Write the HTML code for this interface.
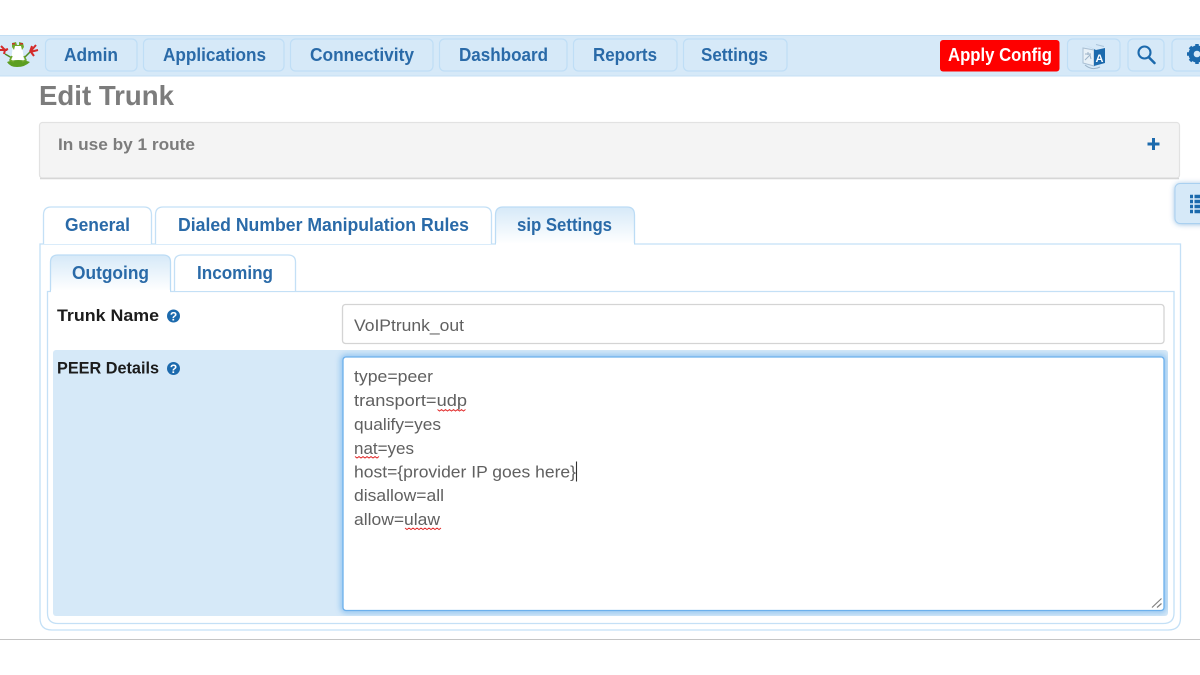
<!DOCTYPE html>
<html><head><meta charset="utf-8"><title>Edit Trunk</title>
<style>
html,body{margin:0;padding:0;background:#fff;width:1200px;height:675px;overflow:hidden}
svg{display:block}
text{font-family:"Liberation Sans",sans-serif}
.n{font-weight:700;font-size:18px;fill:#2a6ba8}
.t{font-weight:700;font-size:18px;fill:#2a6ba8}
.l{font-weight:700;font-size:17px;fill:#1a1a1a}
.a{font-size:17px;fill:#606060}
.b{fill:#d6e9f8;stroke:#bfdef6;stroke-width:1.2}
</style></head><body>
<svg width="1200" height="675" viewBox="0 0 1200 675" xmlns="http://www.w3.org/2000/svg">
<defs>
<linearGradient id="g" x1="0" y1="0" x2="0" y2="1"><stop offset="0" stop-color="#d6e9f8"/><stop offset="1" stop-color="#fff"/></linearGradient>
<filter id="s" x="-40%" y="-40%" width="180%" height="180%"><feGaussianBlur stdDeviation="3"/></filter>
<filter id="soft"><feGaussianBlur stdDeviation="0.3"/></filter>
<clipPath id="row"><rect x="53" y="350" width="1115" height="266" rx="3"/></clipPath>
</defs>
<rect width="1200" height="675" fill="#fff"/>
<g filter="url(#soft)">
<!-- nav -->
<rect x="-2" y="35.5" width="1204" height="40.5" fill="#d6e9f8" stroke="#c4dff4"/>
<rect class="b" x="45.5" y="39" width="91.5" height="32" rx="5"/>
<rect class="b" x="143.5" y="39" width="140.5" height="32" rx="5"/>
<rect class="b" x="290.5" y="39" width="142.5" height="32" rx="5"/>
<rect class="b" x="439.5" y="39" width="127.5" height="32" rx="5"/>
<rect class="b" x="573.5" y="39" width="103.5" height="32" rx="5"/>
<rect class="b" x="683.5" y="39" width="103.5" height="32" rx="5"/>
<rect x="940" y="40" width="119.5" height="31.5" rx="3" fill="#fe0000"/>
<rect class="b" x="1067.5" y="39" width="52.5" height="32" rx="5"/>
<rect class="b" x="1128" y="39" width="36" height="32" rx="5"/>
<rect class="b" x="1172" y="39" width="40" height="32" rx="5"/>
<text class="n" x="64" y="61" textLength="54" lengthAdjust="spacingAndGlyphs">Admin</text>
<text class="n" x="163" y="61" textLength="103" lengthAdjust="spacingAndGlyphs">Applications</text>
<text class="n" x="310" y="61" textLength="104" lengthAdjust="spacingAndGlyphs">Connectivity</text>
<text class="n" x="459" y="61" textLength="89" lengthAdjust="spacingAndGlyphs">Dashboard</text>
<text class="n" x="593" y="61" textLength="64" lengthAdjust="spacingAndGlyphs">Reports</text>
<text class="n" x="701" y="61" textLength="67" lengthAdjust="spacingAndGlyphs">Settings</text>
<text x="948" y="61" textLength="104" lengthAdjust="spacingAndGlyphs" font-weight="700" font-size="18" fill="#fff">Apply Config</text>
<!-- frog -->
<path d="M5 54 L12 58 M25 57 L30 52" fill="none" stroke="#4f8a24" stroke-width="1.500"/>
<path d="M1 46 L5 50 L0 50 M5 50 L4 54 M5 50 L8 49" fill="none" stroke="#d42a2a" stroke-width="2"/>
<path d="M30 52 L32 46 M30 52 L36 45 M30 52 L38 50 M31 52 L34 56" fill="none" stroke="#d42a2a" stroke-width="2"/>
<path d="M13 45 L22 45 L24 61 L11 61 Z" fill="#fff"/>
<path d="M12 43 L16 42 L17 45 L19 45 L19 42 L23 43 L24 47 L22 50 L21 46 L15 46 L14 50 L12 47 Z" fill="#6fa82c"/>
<path d="M12 43 h3 v1.500 h-3 Z M20 43 h3 v1.500 h-3 Z" fill="#c8342a"/>
<path d="M7 62 Q18 58 30 62 Q25 67 17 67 Q10 67 7 62 Z" fill="#5c9e22"/>
<path d="M12 56 L10 60 L14 62 M24 56 L26 60 L22 62" fill="none" stroke="#6fa82c" stroke-width="1.600"/>
<!-- translate icon -->
<path d="M1083 48 L1094 50 L1094 66 L1083 63 Z" fill="#e8f1f8" stroke="#a9bfd3" stroke-width="1"/>
<path d="M1083 44 L1094 49 L1094 66 L1105 63 L1105 48 L1096 50 L1083 44 Z" fill="#1f6aad"/>
<path d="M1096 44.500 L1104 46.500" stroke="#aac4da" stroke-width="1"/>
<text x="1095.500" y="62" font-size="11" font-weight="700" fill="#fff">A</text>
<path d="M1085 65 Q1092 71 1100 67" fill="none" stroke="#9cb3c8" stroke-width="1"/>
<path d="M1085 54 L1091 54 M1088 52 L1088 55 M1085 60 L1090 55 L1091 59" fill="none" stroke="#9cb3c8" stroke-width="1"/>
<!-- search -->
<circle cx="1144.500" cy="52.500" r="6" fill="none" stroke="#1f6aad" stroke-width="2.100"/>
<path d="M1149 57.500 L1154.500 63" stroke="#1f6aad" stroke-width="2.600" stroke-linecap="round"/>
<!-- gear -->
<circle cx="1197" cy="54" r="6" fill="none" stroke="#1f6aad" stroke-width="5"/>
<path d="M1197 44 V64 M1187 54 H1207 M1190 47 L1204 61 M1190 61 L1204 47" stroke="#1f6aad" stroke-width="3.500"/>
<circle cx="1197" cy="54" r="3.300" fill="#d6e9f8"/>
<!-- heading -->
<text x="39" y="105" textLength="135" lengthAdjust="spacingAndGlyphs" font-weight="700" font-size="28" fill="#7b7b7b">Edit Trunk</text>
<!-- panel -->
<rect x="39.500" y="122.500" width="1140" height="55.500" rx="3" fill="#f4f4f4" stroke="#e2e2e2" stroke-width="1.200"/>
<path d="M40 178.500 H1179" stroke="#d6d6d6" stroke-width="1.500"/>
<text x="58" y="150" textLength="137" lengthAdjust="spacingAndGlyphs" font-weight="700" font-size="17" fill="#7b7b7b">In use by 1 route</text>
<path d="M1153.500 138 V150 M1147.500 144 H1159.500" stroke="#1f6aad" stroke-width="3"/>
<!-- side tab -->
<rect x="1175" y="184" width="40" height="40" rx="5" fill="#5b9ad0" filter="url(#s)" opacity=".75"/>
<rect x="1175" y="183.500" width="40" height="40" rx="5" fill="#d6e9f8" stroke="#a9d0f0"/>
<path d="M1190 196.500 h3 m1.500 0 h7 M1190 201.500 h3 m1.500 0 h7 M1190 206.500 h3 m1.500 0 h7 M1190 211.500 h3 m1.500 0 h7" stroke="#1f6aad" stroke-width="3.400" fill="none"/>
<!-- outer panel -->
<path d="M40 244 H1180.500 V618 Q1180.500 630 1168 630 H52 Q40 630 40 618 Z" fill="#fff" stroke="#c4e0f6" stroke-width="1.300"/>
<!-- outer tabs -->
<path d="M43.500 244 V215 Q43.500 207 51 207 H144 Q151.500 207 151.500 215 V244" fill="#fff" stroke="#c4e0f6" stroke-width="1.300"/>
<path d="M155.500 244 V215 Q155.500 207 163 207 H484 Q491.500 207 491.500 215 V244" fill="#fff" stroke="#c4e0f6" stroke-width="1.300"/>
<path d="M495.500 244 V215 Q495.500 207 503 207 H627 Q634.500 207 634.500 215 V244 H495.500 Z" fill="url(#g)" stroke="none"/>
<path d="M495.500 244 V215 Q495.500 207 503 207 H627 Q634.500 207 634.500 215 V244" fill="none" stroke="#bcdcf5" stroke-width="1.300"/>
<rect x="496" y="243" width="138" height="3" fill="#fff"/>
<text class="t" x="65" y="231" textLength="65" lengthAdjust="spacingAndGlyphs">General</text>
<text class="t" x="178" y="231" textLength="291" lengthAdjust="spacingAndGlyphs">Dialed Number Manipulation Rules</text>
<text class="t" x="517" y="231" textLength="95" lengthAdjust="spacingAndGlyphs">sip Settings</text>
<!-- inner panel -->
<path d="M47.500 291.500 H1174 V613 Q1174 623.500 1163 623.500 H58 Q47.500 623.500 47.500 613 Z" fill="#fff" stroke="#c4e0f6" stroke-width="1.300"/>
<!-- inner tabs -->
<path d="M50.500 291 V262 Q50.500 255 58 255 H163 Q170.500 255 170.500 262 V291 Z" fill="url(#g)"/>
<path d="M50.500 291 V262 Q50.500 255 58 255 H163 Q170.500 255 170.500 262 V291" fill="none" stroke="#bcdcf5" stroke-width="1.300"/>
<rect x="51" y="290" width="119" height="3" fill="#fff"/>
<path d="M174.500 291 V262 Q174.500 255 182 255 H288 Q295.500 255 295.500 262 V291" fill="#fff" stroke="#c4e0f6" stroke-width="1.300"/>
<text class="t" x="72" y="279" textLength="77" lengthAdjust="spacingAndGlyphs">Outgoing</text>
<text class="t" x="197" y="279" textLength="76" lengthAdjust="spacingAndGlyphs">Incoming</text>
<!-- trunk name -->
<text class="l" x="57" y="321" textLength="102" lengthAdjust="spacingAndGlyphs">Trunk Name</text>
<circle cx="173.500" cy="316" r="6.500" fill="#1f6aad"/>
<text x="173.500" y="320.500" font-size="12" font-weight="700" fill="#fff" text-anchor="middle">?</text>
<rect x="342.500" y="304.500" width="821.500" height="39" rx="3" fill="#fff" stroke="#d4d4d4" stroke-width="1.300"/>
<text class="a" x="354" y="331" textLength="110" lengthAdjust="spacingAndGlyphs">VoIPtrunk_out</text>
<!-- peer row -->
<rect x="53" y="350" width="1115" height="266" rx="3" fill="#d6e9f8"/>
<g clip-path="url(#row)"><rect x="343" y="357" width="821" height="253.500" rx="3" fill="none" stroke="#6cb0ec" stroke-width="5" filter="url(#s)" opacity=".7"/></g>
<text class="l" x="57" y="373.500" textLength="102" lengthAdjust="spacingAndGlyphs">PEER Details</text>
<circle cx="173.500" cy="368.500" r="6.500" fill="#1f6aad"/>
<text x="173.500" y="373" font-size="12" font-weight="700" fill="#fff" text-anchor="middle">?</text>
<rect x="343" y="357" width="821" height="253.500" rx="3" fill="#fff" stroke="#6cb0ec" stroke-width="1.300"/>
<text class="a" x="354" y="382" textLength="79" lengthAdjust="spacingAndGlyphs">type=peer</text>
<text class="a" x="354" y="406" textLength="113" lengthAdjust="spacingAndGlyphs">transport=udp</text>
<text class="a" x="354" y="430" textLength="87" lengthAdjust="spacingAndGlyphs">qualify=yes</text>
<text class="a" x="354" y="454" textLength="60" lengthAdjust="spacingAndGlyphs">nat=yes</text>
<text class="a" x="354" y="477.500" textLength="222" lengthAdjust="spacingAndGlyphs">host={provider IP goes here}</text>
<text class="a" x="354" y="501" textLength="90" lengthAdjust="spacingAndGlyphs">disallow=all</text>
<text class="a" x="354" y="525" textLength="86" lengthAdjust="spacingAndGlyphs">allow=ulaw</text>
<path d="M437.500 409.500 l2 1.500 l2 -1.500 l2 1.500 l2 -1.500 l2 1.500 l2 -1.500 l2 1.500 l2 -1.500 l2 1.500 l2 -1.500 l2 1.500 l2 -1.500 l2 1.500 l2 -1.500" fill="none" stroke="#e02020" stroke-width=".9"/>
<path d="M355 456.500 l2 1.500 l2 -1.500 l2 1.500 l2 -1.500 l2 1.500 l2 -1.500 l2 1.500 l2 -1.500 l2 1.500 l2 -1.500 l2 1.500 l2 -1.500" fill="none" stroke="#e02020" stroke-width=".9"/>
<path d="M405 528 l2 1.500 l2 -1.500 l2 1.500 l2 -1.500 l2 1.500 l2 -1.500 l2 1.500 l2 -1.500 l2 1.500 l2 -1.500 l2 1.500 l2 -1.500 l2 1.500 l2 -1.500 l2 1.500 l2 -1.500 l2 1.500 l2 -1.500" fill="none" stroke="#e02020" stroke-width=".9"/>
<path d="M576.500 461.500 V481.500" stroke="#333" stroke-width="1.100"/>
<path d="M1152 607.500 L1161.500 598.500 M1157 607.500 L1161.500 603.500" stroke="#808080" stroke-width="1.200"/>
<!-- bottom rule -->
<path d="M0 639.500 H1200" stroke="#c4c4c4" stroke-width="1"/>
</g>
</svg>
</body></html>
